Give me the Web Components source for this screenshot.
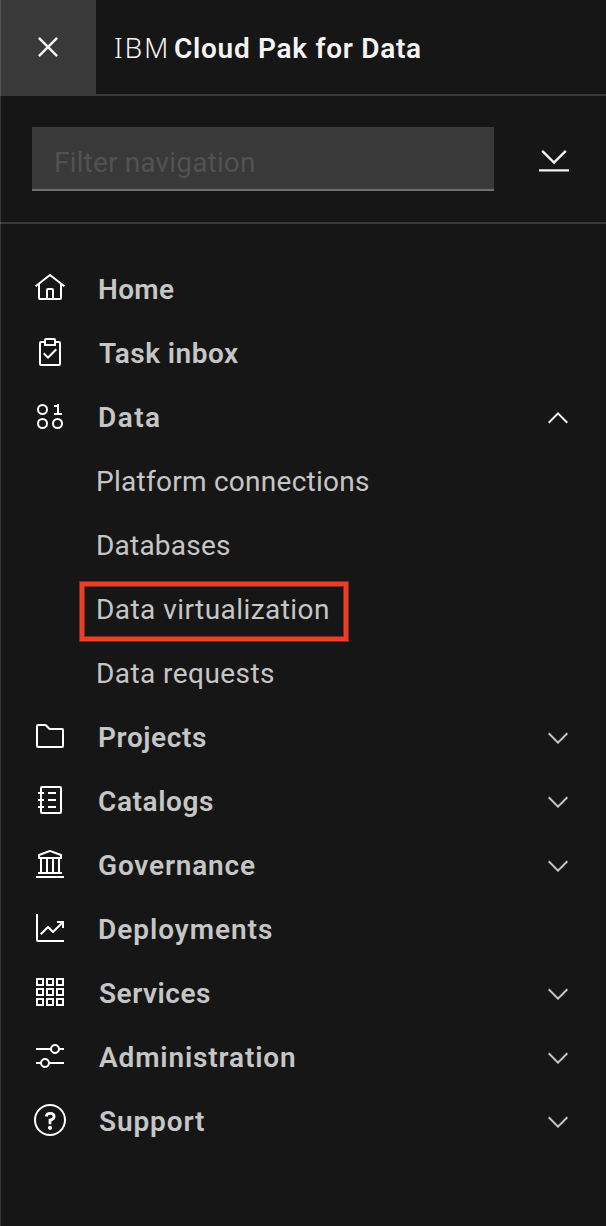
<!DOCTYPE html>
<html lang="en">
<head>
<meta charset="utf-8">
<title>IBM Cloud Pak for Data</title>
<style>
  body {
    margin: 0;
    background: #161616;
    font-family: Roboto, "Liberation Sans", sans-serif;
    font-size: 28px;
    color: #c6c6c6;
  }
</style>
</head>
<body>
<side-panel>
  <panel-header slot="header">
    <fit-text slot="prefix" span="51">IBM</fit-text>
    <fit-text slot="name" span="245">Cloud Pak for Data</fit-text>
  </panel-header>
  <nav-filter slot="header"><fit-text span="198">Filter navigation</fit-text></nav-filter>

  <nav-item icon="home"><fit-text span="75">Home</fit-text></nav-item>
  <nav-item icon="task"><fit-text span="139">Task inbox</fit-text></nav-item>
  <nav-item icon="data" toggle="up">
    <fit-text span="60">Data</fit-text>
    <nav-link slot="children"><fit-text span="271">Platform connections</fit-text></nav-link>
    <nav-link slot="children"><fit-text span="132">Databases</fit-text></nav-link>
    <nav-link slot="children" marked><fit-text span="230">Data virtualization</fit-text></nav-link>
    <nav-link slot="children"><fit-text span="176">Data requests</fit-text></nav-link>
  </nav-item>
  <nav-item icon="folder" toggle="down"><fit-text span="107">Projects</fit-text></nav-item>
  <nav-item icon="catalog" toggle="down"><fit-text span="114">Catalogs</fit-text></nav-item>
  <nav-item icon="finance" toggle="down"><fit-text span="156">Governance</fit-text></nav-item>
  <nav-item icon="growth"><fit-text span="173">Deployments</fit-text></nav-item>
  <nav-item icon="grid" toggle="down"><fit-text span="111">Services</fit-text></nav-item>
  <nav-item icon="adjust" toggle="down"><fit-text span="196">Administration</fit-text></nav-item>
  <nav-item icon="help" toggle="down"><fit-text span="105">Support</fit-text></nav-item>
</side-panel>

<script>
'use strict';

const ICONS = {
  close: '<path d="M24 9.4 22.6 8 16 14.6 9.4 8 8 9.4 14.6 16 8 22.6 9.4 24 16 17.4 22.6 24 24 22.6 17.4 16z"/>',
  collapse: '<path d="M4.2 5.9 16 17.6 27.8 5.9M1 25.3H31" fill="none" stroke="currentColor" stroke-width="2.3"/>',
  up: '<path d="M16 10 26 20 24.6 21.4 16 12.8 7.4 21.4 6 20z"/>',
  down: '<path d="M16 22 6 12 7.4 10.6 16 19.2 24.6 10.6 26 12z"/>',
  home: '<path d="M16.612 2.214a1.01 1.01 0 0 0-1.242 0L1 13.419l1.243 1.572L4 13.621V26a2.004 2.004 0 0 0 2 2h20a2.004 2.004 0 0 0 2-2V13.63L29.757 15 31 13.428ZM18 26h-4v-8h4Zm2 0v-8a2.002 2.002 0 0 0-2-2h-4a2.002 2.002 0 0 0-2 2v8H6V12.062l10-7.79 10 7.8V26Z"/>',
  task: '<path d="M14 20.18 10.41 16.59 9 18l5 5 9-9-1.41-1.42z"/><path d="M25 5h-3V4a2 2 0 0 0-2-2h-8a2 2 0 0 0-2 2v1H7a2 2 0 0 0-2 2v21a2 2 0 0 0 2 2h18a2 2 0 0 0 2-2V7a2 2 0 0 0-2-2ZM12 4h8v4h-8Zm13 24H7V7h3v3h12V7h3Z"/>',
  data: '<g fill="none" stroke="currentColor" stroke-width="2"><circle cx="8.5" cy="9.5" r="4.5"/><circle cx="8.5" cy="23.5" r="4.5"/><circle cx="23.5" cy="23.5" r="4.5"/><path d="M20 6H24V14M20 14h8M24 4V6"/></g>',
  folder: '<path d="M11.17 6l3.42 3.41.58.59H28V26H4V6h7.17m0-2H4a2 2 0 0 0-2 2V26a2 2 0 0 0 2 2H28a2 2 0 0 0 2-2V10a2 2 0 0 0-2-2H16L12.59 4.59A2 2 0 0 0 11.17 4Z"/>',
  catalog: '<path d="M26 2H8A2 2 0 0 0 6 4V8H4v2H6v5H4v2H6v5H4v2H6v4a2 2 0 0 0 2 2H26a2 2 0 0 0 2-2V4A2 2 0 0 0 26 2Zm0 26H8V24h2V22H8V17h2V15H8V10h2V8H8V4H26Z"/><path d="M14 8h8v2h-8zM14 15h8v2h-8zM14 22h8v2h-8z"/>',
  finance: '<path d="M2 28h28v2H2z"/><path d="M27 11a1 1 0 0 0 1-1V7a1 1 0 0 0-.66-.94l-11-4a1 1 0 0 0-.68 0l-11 4A1 1 0 0 0 4 7v3a1 1 0 0 0 1 1h1v13H4v2h24v-2h-2V11ZM6 7.7l10-3.64L26 7.7V9H6ZM18 24h-4V11h4ZM8 11h4v13H8Zm16 13h-4V11h4Z"/>',
  growth: '<path d="M4 2H2v26a2 2 0 0 0 2 2h26v-2H4z"/><path d="M30 9h-7v2h3.59L19 18.59l-4.29-4.3a1 1 0 0 0-1.42 0L6 21.59 7.41 23 14 16.41l4.29 4.3a1 1 0 0 0 1.42 0L28 12.41V16h2z"/>',
  grid: '<path d="M3 3h6v6H3zM13 3h6v6h-6zM23 3h6v6h-6zM3 13h6v6H3zM13 13h6v6h-6zM23 13h6v6h-6zM3 23h6v6H3zM13 23h6v6h-6zM23 23h6v6h-6z" fill="none" stroke="currentColor" stroke-width="2"/>',
  adjust: '<path d="M30 8h-4.1c-.5-2.3-2.5-4-4.9-4s-4.4 1.7-4.9 4H2v2h14.1c.5 2.3 2.5 4 4.9 4s4.4-1.7 4.9-4H30zm-9 4c-1.7 0-3-1.3-3-3s1.3-3 3-3 3 1.3 3 3-1.3 3-3 3zM2 24h4.1c.5 2.3 2.5 4 4.9 4s4.4-1.7 4.9-4H30v-2H15.9c-.5-2.3-2.5-4-4.9-4s-4.4 1.7-4.9 4H2zm9-4c1.7 0 3 1.3 3 3s-1.3 3-3 3-3-1.3-3-3 1.3-3 3-3z"/>',
  help: '<circle cx="16" cy="16" r="15" fill="none" stroke="currentColor" stroke-width="2"/><path d="M12.2 12.5C12.5 10.4 13.9 9.4 16.2 9.4c2.4 0 3.9 1.2 3.9 3.1 0 2.1-1.5 3.2-4.1 3.6v4.1" fill="none" stroke="currentColor" stroke-width="2.8"/><circle cx="16" cy="23.8" r="2.1"/>',
};

function attach(element, html) {
  const template = document.createElement('template');
  template.innerHTML = html;
  element.attachShadow({ mode: 'open' }).appendChild(template.content.cloneNode(true));
}

class UiIcon extends HTMLElement {
  connectedCallback() {
    attach(this, `
<style>
  :host { display: block; flex: none; width: 32px; height: 32px; }
  svg { display: block; width: 100%; height: 100%; fill: currentColor; }
</style>
<svg viewBox="0 0 32 32" aria-hidden="true">${ICONS[this.getAttribute('name')]}</svg>`);
  }
}

// Tracks its text out so that the letters cover `span` pixels from edge to edge.
class FitText extends HTMLElement {
  connectedCallback() {
    attach(this, '<style>:host { display: block; white-space: pre; }</style><slot></slot>');
    this.fit();
  }

  fit() {
    const text = this.textContent;
    const style = getComputedStyle(this);
    const context = document.createElement('canvas').getContext('2d');
    context.font = `${style.fontWeight} ${style.fontSize} ${style.fontFamily}`;
    const box = context.measureText(text);
    const ink = box.actualBoundingBoxLeft + box.actualBoundingBoxRight;
    const gap = (Number(this.getAttribute('span')) - ink) / (text.length - 1);
    this.style.letterSpacing = `${gap.toFixed(3)}px`;
    this.style.textIndent = `${box.actualBoundingBoxLeft.toFixed(2)}px`;
  }
}

class SidePanel extends HTMLElement {
  constructor() {
    super();
    attach(this, `
<style>
  :host {
    display: block;
    position: relative;
    box-sizing: border-box;
    height: 1226px;
    background: #161616;
  }
  :host::after {
    content: "";
    position: absolute;
    inset: 0 auto 0 0;
    width: 1px;
    background: rgba(255, 255, 255, 0.14);
  }
  nav { padding-top: 32px; }
</style>
<slot name="header"></slot>
<nav><slot></slot></nav>`);
  }
}

class PanelHeader extends HTMLElement {
  constructor() {
    super();
    attach(this, `
<style>
  :host { display: flex; height: 96px; color: #f4f4f4; }
  button {
    display: flex;
    justify-content: center;
    width: 96px;
    height: 96px;
    padding: 27px 0 0;
    border: 0;
    background: #393939;
    color: inherit;
  }
  ui-icon { width: 40px; height: 40px; }
  h1 {
    display: flex;
    flex: 1;
    box-sizing: border-box;
    margin: 0;
    padding: 2px 0 0 19px;
    border-bottom: 2px solid #393939;
    font-size: 28px;
    line-height: 94px;
    font-weight: 600;
  }
  .prefix {
    width: 60px;
    font-family: "Noto Sans", sans-serif;
    font-weight: 300;
    line-height: 91px;
  }
</style>
<button aria-label="Close"><ui-icon name="close"></ui-icon></button>
<h1><span class="prefix"><slot name="prefix"></slot></span><slot name="name"></slot></h1>`);
  }
}

class NavFilter extends HTMLElement {
  constructor() {
    super();
    attach(this, `
<style>
  :host {
    display: flex;
    box-sizing: border-box;
    height: 128px;
    padding: 31px 36px 0 32px;
    border-bottom: 2px solid #393939;
    justify-content: space-between;
  }
  .field {
    box-sizing: border-box;
    width: 462px;
    height: 64px;
    padding: 5px 0 0 24px;
    border-bottom: 2px solid #6f6f6f;
    background: #393939;
    color: #525252;
    line-height: 62px;
  }
  ui-icon { margin-top: 18px; color: #f4f4f4; }
</style>
<div class="field"><slot></slot></div>
<ui-icon name="collapse"></ui-icon>`);
  }
}

class NavItem extends HTMLElement {
  connectedCallback() {
    const toggle = this.getAttribute('toggle');
    attach(this, `
<style>
  :host { display: block; }
  .row {
    display: flex;
    align-items: center;
    height: 64px;
    padding: 0 32px 0 34px;
  }
  .row > ui-icon { color: #fff; }
  .row > .toggle { margin-top: 4px; color: ${toggle === 'up' ? '#f4f4f4' : '#c6c6c6'}; }
  .label {
    flex: 1;
    padding: 3px 0 0 33px;
    font-weight: 600;
    line-height: 61px;
  }
</style>
<div class="row">
  <ui-icon name="${this.getAttribute('icon')}"></ui-icon>
  <div class="label"><slot></slot></div>
  ${toggle ? `<ui-icon class="toggle" name="${toggle}"></ui-icon>` : ''}
</div>
<slot name="children"></slot>`);
  }
}

class NavLink extends HTMLElement {
  constructor() {
    super();
    attach(this, `
<style>
  :host {
    display: block;
    position: relative;
    box-sizing: border-box;
    height: 64px;
    padding: 3px 0 0 98px;
    line-height: 61px;
    font-weight: 400;
  }
  :host([marked])::after {
    content: "";
    position: absolute;
    left: 80px;
    top: 6px;
    box-sizing: border-box;
    width: 268px;
    height: 59px;
    border: 4px solid #ee3e23;
    box-shadow: 0 0 0 1px rgba(238, 62, 35, 0.5), inset 0 0 0 1px rgba(238, 62, 35, 0.5);
  }
</style>
<slot></slot>`);
  }
}

customElements.define('ui-icon', UiIcon);
customElements.define('side-panel', SidePanel);
customElements.define('panel-header', PanelHeader);
customElements.define('nav-filter', NavFilter);
customElements.define('nav-item', NavItem);
customElements.define('nav-link', NavLink);
customElements.define('fit-text', FitText);
</script>
</body>
</html>
